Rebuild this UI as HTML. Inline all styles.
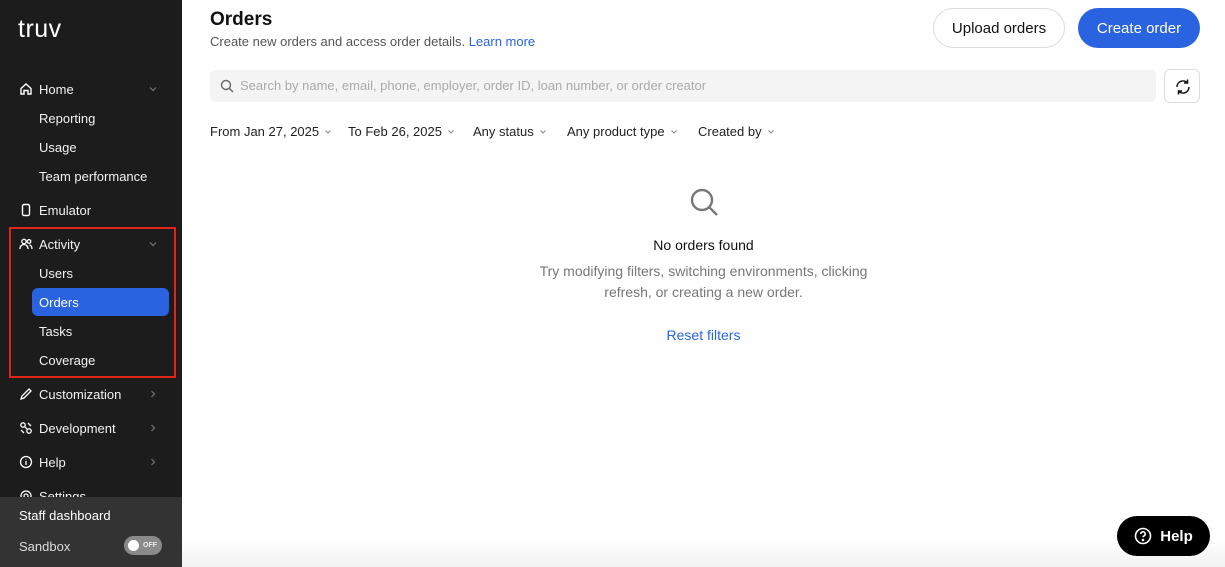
<!DOCTYPE html>
<html><head><meta charset="utf-8"><style>
*{margin:0;padding:0;box-sizing:border-box}
body{width:1225px;height:567px;overflow:hidden;font-family:"Liberation Sans",Arial,sans-serif;background:#fff;position:relative}
.sb{position:absolute;left:0;top:0;width:182px;height:567px;background:#1c1c1c;color:#fff;overflow:hidden}
.logo{position:absolute;left:18px;top:15px;font-size:25px;font-weight:400;letter-spacing:0.5px}
.it{position:absolute;left:39px;font-size:13px;color:#f2f2f2}
.ic{position:absolute;left:19px;width:14px;height:14px}
.chev{position:absolute;left:148px;width:10px;height:10px}
.sel{position:absolute;left:32px;top:288px;width:137px;height:28px;background:#2a63e0;border-radius:6px}
.box{position:absolute;left:9px;top:227px;width:167px;height:151px;border:2px solid #e0261a}
.bot{position:absolute;left:0;top:497px;width:182px;height:70px;background:#333}
.main{position:absolute;left:182px;top:0;right:0;height:567px}
h1{position:absolute;left:28px;top:9px;font-size:19px;font-weight:700;color:#111}
.sub{position:absolute;left:28px;top:34px;font-size:13px;color:#555}
.sub a{color:#2a63e0;text-decoration:none}
.btn{position:absolute;top:8px;height:40px;border-radius:20px;font-size:15px;display:flex;align-items:center;justify-content:center}
.search{position:absolute;left:28px;top:70px;width:946px;height:32px;background:#f4f4f4;border-radius:6px;font-size:13px;color:#aaa;padding-left:30px;line-height:32px}
.ref{position:absolute;left:982px;top:69px;width:36px;height:34px;border:1px solid #ddd;border-radius:6px}
.f{position:absolute;top:124px;font-size:13px;color:#222;display:flex;align-items:center}
.f svg{margin-left:5px}
.c{position:absolute;left:0;width:1043px;text-align:center}
</style></head><body>
<div class="sb">
<div class="logo">truv</div>
<svg class="ic" style="top:82px" viewBox="0 0 14 14" fill="none" stroke="#fff" stroke-width="1.4"><path d="M2 6.5L7 2l5 4.5V12H9V8.5H5V12H2z"/></svg>
<div class="it" style="top:82px">Home</div>
<svg class="chev" style="top:84px" viewBox="0 0 10 10" fill="none" stroke="#777" stroke-width="1.2"><path d="M2 3.5l3 3 3-3"/></svg>
<div class="it" style="top:111px">Reporting</div>
<div class="it" style="top:140px">Usage</div>
<div class="it" style="top:169px">Team performance</div>
<svg class="ic" style="top:203px" viewBox="0 0 14 14" fill="none" stroke="#fff" stroke-width="1.4"><rect x="3.5" y="1.5" width="7" height="11" rx="1.5"/></svg>
<div class="it" style="top:203px">Emulator</div>
<div class="box"></div>
<svg class="ic" style="top:237px" viewBox="0 0 14 14" fill="none" stroke="#fff" stroke-width="1.3"><circle cx="5" cy="4.5" r="2.2"/><path d="M1 12c0-3 2-4.5 4-4.5s4 1.5 4 4.5"/><circle cx="10" cy="4.5" r="1.8"/><path d="M10.5 8c1.5.3 2.5 1.7 2.5 4"/></svg>
<div class="it" style="top:237px">Activity</div>
<svg class="chev" style="top:239px" viewBox="0 0 10 10" fill="none" stroke="#777" stroke-width="1.2"><path d="M2 3.5l3 3 3-3"/></svg>
<div class="it" style="top:266px">Users</div>
<div class="sel"></div>
<div class="it" style="top:295px;color:#fff">Orders</div>
<div class="it" style="top:324px">Tasks</div>
<div class="it" style="top:353px">Coverage</div>
<svg class="ic" style="top:387px" viewBox="0 0 14 14" fill="none" stroke="#fff" stroke-width="1.3"><path d="M2 12l1-3 7-7 2 2-7 7z"/></svg>
<div class="it" style="top:387px">Customization</div>
<svg class="chev" style="top:389px" viewBox="0 0 10 10" fill="none" stroke="#777" stroke-width="1.2"><path d="M3.5 2l3 3-3 3"/></svg>
<svg class="ic" style="top:421px" viewBox="0 0 14 14" fill="none" stroke="#fff" stroke-width="1.3"><circle cx="4" cy="4" r="2.2"/><circle cx="10" cy="10" r="2.2"/><path d="M9 2l3 3M2 9l3 3M6 6l2 2"/></svg>
<div class="it" style="top:421px">Development</div>
<svg class="chev" style="top:423px" viewBox="0 0 10 10" fill="none" stroke="#777" stroke-width="1.2"><path d="M3.5 2l3 3-3 3"/></svg>
<svg class="ic" style="top:455px" viewBox="0 0 14 14" fill="none" stroke="#fff" stroke-width="1.3"><circle cx="7" cy="7" r="5.5"/><path d="M7 6v4M7 4v.5"/></svg>
<div class="it" style="top:455px">Help</div>
<svg class="chev" style="top:457px" viewBox="0 0 10 10" fill="none" stroke="#777" stroke-width="1.2"><path d="M3.5 2l3 3-3 3"/></svg>
<svg class="ic" style="top:489px" viewBox="0 0 14 14" fill="none" stroke="#fff" stroke-width="1.3"><circle cx="7" cy="7" r="5"/><circle cx="7" cy="7" r="2"/></svg>
<div class="it" style="top:489px">Settings</div>
<div class="bot">
<div style="position:absolute;left:19px;top:11px;font-size:13px;color:#fff">Staff dashboard</div>
<div style="position:absolute;left:19px;top:42px;font-size:13px;color:#ddd">Sandbox</div>
<div style="position:absolute;left:124px;top:39px;width:38px;height:19px;border-radius:10px;background:#8a8a8a"><div style="position:absolute;left:4px;top:4px;width:11px;height:11px;border-radius:50%;background:#fff"></div><span style="position:absolute;left:19px;top:6px;font-size:7px;line-height:7px;font-weight:700;color:#eee">OFF</span></div>
</div>
</div>
<div class="main">
<h1>Orders</h1>
<div class="sub">Create new orders and access order details. <a>Learn more</a></div>
<div class="btn" style="left:751px;width:132px;border:1px solid #ddd;color:#111">Upload orders</div>
<div class="btn" style="left:896px;width:122px;background:#2a63e0;color:#fff">Create order</div>
<div class="search">Search by name, email, phone, employer, order ID, loan number, or order creator</div>
<svg style="position:absolute;left:38px;top:79px" width="14" height="14" viewBox="0 0 14 14" fill="none" stroke="#666" stroke-width="1.4"><circle cx="6" cy="6" r="4.5"/><path d="M9.5 9.5L13 13"/></svg>
<div class="ref"><svg style="position:absolute;left:9px;top:8px" width="18" height="18" viewBox="0 0 18 18" fill="none" stroke="#111" stroke-width="1.5"><path d="M3 9a6 6 0 0 1 10.5-4"/><path d="M15 9a6 6 0 0 1-10.5 4"/><path d="M13.5 1.5V5H10" /><path d="M4.5 16.5V13H8"/></svg></div>
<div class="f" style="left:28px">From Jan 27, 2025<svg width="8" height="8" viewBox="0 0 8 8" fill="none" stroke="#888" stroke-width="1"><path d="M1.5 2.5L4 5l2.5-2.5"/></svg></div>
<div class="f" style="left:166px">To Feb 26, 2025<svg width="8" height="8" viewBox="0 0 8 8" fill="none" stroke="#888" stroke-width="1"><path d="M1.5 2.5L4 5l2.5-2.5"/></svg></div>
<div class="f" style="left:291px">Any status<svg width="8" height="8" viewBox="0 0 8 8" fill="none" stroke="#888" stroke-width="1"><path d="M1.5 2.5L4 5l2.5-2.5"/></svg></div>
<div class="f" style="left:385px">Any product type<svg width="8" height="8" viewBox="0 0 8 8" fill="none" stroke="#888" stroke-width="1"><path d="M1.5 2.5L4 5l2.5-2.5"/></svg></div>
<div class="f" style="left:516px">Created by<svg width="8" height="8" viewBox="0 0 8 8" fill="none" stroke="#888" stroke-width="1"><path d="M1.5 2.5L4 5l2.5-2.5"/></svg></div>
<svg style="position:absolute;left:507px;top:187px" width="30" height="30" viewBox="0 0 30 30" fill="none" stroke="#777" stroke-width="2.4"><circle cx="13" cy="13" r="10"/><path d="M20.5 20.5L28 28"/></svg>
<div class="c" style="top:237px;font-size:14px;color:#111">No orders found</div>
<div class="c" style="top:261px;font-size:14px;color:#777;line-height:21px">Try modifying filters, switching environments, clicking<br>refresh, or creating a new order.</div>
<div class="c" style="top:327px;font-size:14px;color:#2a63e0">Reset filters</div>
<div style="position:absolute;left:0;right:0;bottom:0;height:30px;background:linear-gradient(#fff,#f2f2f2)"></div>
<div style="position:absolute;left:935px;top:516px;width:93px;height:40px;border-radius:20px;background:#000;color:#fff;font-size:15px;font-weight:700;display:flex;align-items:center;justify-content:center;gap:8px"><svg width="18" height="18" viewBox="0 0 18 18" fill="none" stroke="#fff" stroke-width="1.6"><circle cx="9" cy="9" r="7.5"/><path d="M6.8 7a2.2 2.2 0 1 1 3 2c-.6.3-.8.7-.8 1.3"/><circle cx="9" cy="13" r=".5" fill="#fff"/></svg>Help</div>
</div>
</body></html>
